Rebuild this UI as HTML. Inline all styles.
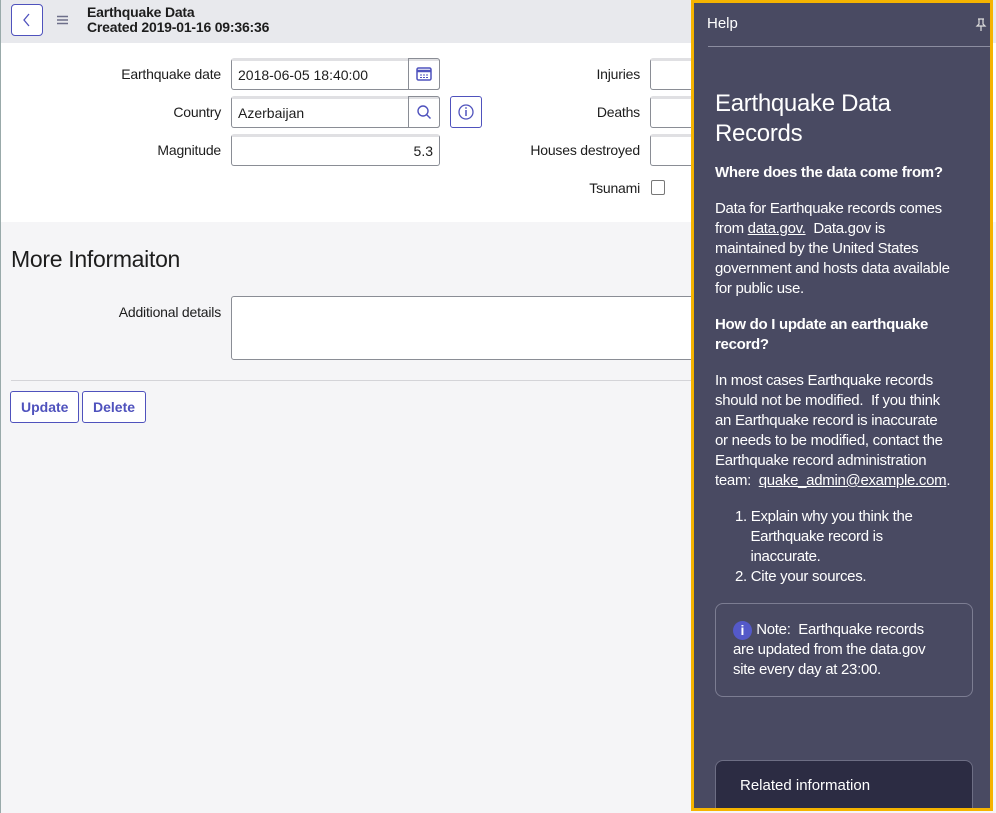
<!DOCTYPE html>
<html><head><meta charset="utf-8"><style>
*{box-sizing:border-box;margin:0;padding:0}
body{width:996px;height:813px;overflow:hidden;font-family:"Liberation Sans",sans-serif;background:#f5f5f7;position:relative;color:#1d1d1d}
.hdr{position:absolute;left:0;top:0;width:996px;height:43px;background:#e8e9ed;border-left:1px solid #9aa}
.back{position:absolute;left:10px;top:4px;width:32px;height:32px;border:1px solid #4f52bd;border-radius:4px;background:#fff}
.ttl{position:absolute;left:86px;top:5px;font-size:14px;font-weight:bold;line-height:15px;letter-spacing:-0.2px}
.form{position:absolute;left:0;top:43px;width:996px;height:179px;background:#fff;border-left:1px solid #9aa}
.lower{position:absolute;left:0;top:222px;width:996px;height:591px;border-left:1px solid #9aa}
.lbl{position:absolute;font-size:14px;text-align:right;width:200px;letter-spacing:-0.2px}
.inp{position:absolute;height:32px;border:1px solid #8a8d95;border-radius:3px;background:#fff;font-size:14px;padding:6px 6px;border-top:3px solid #e0e0e3}
.ib{position:absolute;width:32px;height:32px;right:-1px;top:-3px;border:1px solid #8a8d95;border-radius:0 3px 3px 0}
.btn{position:absolute;top:391px;height:32px;border:1px solid #4f52bd;border-radius:3px;background:#fff;color:#4f52bd;font-weight:bold;font-size:14px;padding:7px 10px}
.panel{position:absolute;left:691px;top:0;width:302px;height:811px;border:3px solid #f5b400;background:#494a62;color:#fff;overflow:hidden}
.p{position:absolute;left:21px;width:270px;font-size:15px;line-height:20px;letter-spacing:-0.3px;white-space:nowrap}
u{text-decoration:underline}
</style></head><body>
<div class="hdr">
<div class="back"><svg width="30" height="30"><path d="M17 9l-5 6 5 6" stroke="#4f52bd" fill="none" stroke-width="1.3"/></svg></div>
<svg style="position:absolute;left:56px;top:15px" width="12" height="10"><path d="M0 1.5h11M0 5h11M0 8.5h11" stroke="#6d6f8a" stroke-width="1.5"/></svg>
<div class="ttl">Earthquake Data<br>Created 2019-01-16 09:36:36</div>
</div>
<div class="form">
<div class="lbl" style="left:20px;top:23px">Earthquake date</div>
<div class="inp" style="left:230px;top:15px;width:209px">2018-06-05 18:40:00<div class="ib"><svg width="30" height="30"><rect x="8" y="9" width="14" height="12" rx="1.5" fill="none" stroke="#4f52bd" stroke-width="1.5"/><path d="M8 12h14" stroke="#4f52bd" stroke-width="2.5"/><path d="M11 16h2M14 16h2M17 16h2M11 18.5h2M14 18.5h2M17 18.5h2" stroke="#4f52bd"/></svg></div></div>
<div class="lbl" style="left:20px;top:61px">Country</div>
<div class="inp" style="left:230px;top:53px;width:209px">Azerbaijan<div class="ib"><svg width="30" height="30"><circle cx="14" cy="14" r="5" fill="none" stroke="#4f52bd" stroke-width="1.4"/><path d="M17.5 17.5l4 4" stroke="#4f52bd" stroke-width="1.4"/></svg></div></div>
<div style="position:absolute;left:449px;top:53px;width:32px;height:32px;border:1px solid #4f52bd;border-radius:3px"><svg width="30" height="30"><circle cx="15" cy="15" r="7" fill="none" stroke="#4f52bd" stroke-width="1.3"/><path d="M15 13v6" stroke="#4f52bd" stroke-width="1.5"/><circle cx="15" cy="11" r="0.9" fill="#4f52bd"/></svg></div>
<div class="lbl" style="left:20px;top:99px">Magnitude</div>
<div class="inp" style="left:230px;top:91px;width:209px;text-align:right">5.3</div>
<div class="lbl" style="left:439px;top:23px">Injuries</div>
<div class="inp" style="left:649px;top:15px;width:60px"></div>
<div class="lbl" style="left:439px;top:61px">Deaths</div>
<div class="inp" style="left:649px;top:53px;width:60px"></div>
<div class="lbl" style="left:439px;top:99px">Houses destroyed</div>
<div class="inp" style="left:649px;top:91px;width:60px"></div>
<div class="lbl" style="left:439px;top:137px">Tsunami</div>
<div style="position:absolute;left:650px;top:137px;width:14px;height:15px;border:1px solid #777;border-radius:2px"></div>
</div>
<div class="lower">
<div style="position:absolute;left:10px;top:24px;font-size:23px;letter-spacing:-0.3px">More Informaiton</div>
<div class="lbl" style="left:20px;top:82px">Additional details</div>
<div style="position:absolute;left:230px;top:74px;width:500px;height:64px;border:1px solid #8a8d95;border-radius:3px;background:#fff"></div>
<div style="position:absolute;left:10px;top:158px;width:700px;height:1px;background:#d4d4d8"></div>
</div>
<div class="btn" style="left:10px">Update</div>
<div class="btn" style="left:82px">Delete</div>
<div class="panel">
<div style="position:absolute;left:13px;top:12px;font-size:15px">Help</div>
<svg style="position:absolute;left:281px;top:15px" width="12" height="14"><path d="M3 1h6M4 1v5L2 8h8L8 6V1M6 8v5" stroke="#ddd" fill="none" stroke-width="1.2"/></svg>
<div style="position:absolute;left:14px;top:43px;width:290px;height:1px;background:#8c8da0"></div>
<div class="p" style="top:86px;font-size:24px;line-height:30px">Earthquake Data<br>Records</div>
<div class="p" style="top:160px;font-weight:bold">Where does the data come from?</div>
<div class="p" style="top:196px">Data for Earthquake records comes<br>from <u>data.gov.</u>&nbsp; Data.gov is<br>maintained by the United States<br>government and hosts data available<br>for public use.</div>
<div class="p" style="top:312px;font-weight:bold">How do I update an earthquake<br>record?</div>
<div class="p" style="top:368px">In most cases Earthquake records<br>should not be modified.&nbsp; If you think<br>an Earthquake record is inaccurate<br>or needs to be modified, contact the<br>Earthquake record administration<br>team:&nbsp; <u>quake_admin@example.com</u>.</div>
<div class="p" style="top:504px;left:41px">1. Explain why you think the<br>&nbsp;&nbsp;&nbsp;&nbsp;Earthquake record is<br>&nbsp;&nbsp;&nbsp;&nbsp;inaccurate.<br>2. Cite your sources.</div>
<div style="position:absolute;left:21px;top:600px;width:258px;height:94px;border:1px solid #7c7d92;border-radius:8px"></div>
<div style="position:absolute;left:39px;top:618px;width:19px;height:19px;border-radius:50%;background:#5459c9;font-size:14px;font-weight:bold;text-align:center;line-height:19px">i</div>
<div class="p" style="top:617px;left:39px">&nbsp;&nbsp;&nbsp;&nbsp;&nbsp;&nbsp;Note:&nbsp; Earthquake records<br>are updated from the data.gov<br>site every day at 23:00.</div>
<div style="position:absolute;left:21px;top:757px;width:258px;height:70px;border:1px solid #6d6e84;border-radius:8px;background:#2c2c43"></div>
<div style="position:absolute;left:46px;top:774px;font-size:15px">Related information</div>
</div>
</body></html>
